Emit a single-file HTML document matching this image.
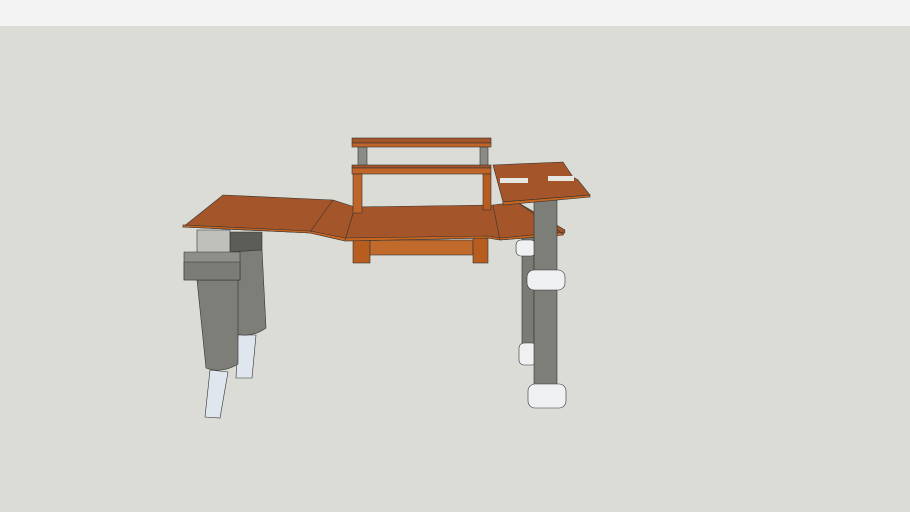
<!DOCTYPE html>
<html><head><style>
html,body{margin:0;padding:0;width:910px;height:512px;overflow:hidden;background:#dcdcd6}
</style></head><body>
<svg width="910" height="512" xmlns="http://www.w3.org/2000/svg" style="display:block">
<rect x="0" y="0" width="910" height="26" fill="#f3f3f3"/>
<rect x="0" y="26" width="910" height="486" fill="#dcdcd6"/>
<g stroke="#333" stroke-width="0.6">
<rect x="522" y="230" width="12" height="125" fill="#7a7b74"/>
<rect x="516" y="240" width="20" height="16" rx="5" fill="#eef0f2"/>
<rect x="519" y="343" width="18" height="22" rx="5" fill="#eef0f2"/>
<polygon points="238,335 256,335 252,378 236,378" fill="#dfe6ee"/>
<path d="M232,250 L262,250 L266,328 Q252,338 236,334 Z" fill="#7d7e77"/>
<polygon points="230,232 262,232 262,250 230,252" fill="#5c5d58"/>
<polygon points="210,370 228,372 220,418 205,417" fill="#dfe6ee"/>
<path d="M197,280 L238,280 L238,364 Q222,374 206,368 Z" fill="#7d7e77"/>
<polygon points="197,230 230,230 230,262 197,262" fill="#b8b9b5" fill-opacity="0.8"/>
<polygon points="184,252 240,252 240,280 184,280" fill="#8e8f89"/>
<polygon points="184,262 240,262 240,280 184,280" fill="#7b7c76"/>
<rect x="353" y="238" width="17" height="25" fill="#b85d20"/>
<rect x="370" y="240" width="103" height="15" fill="#c06a2b"/>
<rect x="473" y="238" width="15" height="25" fill="#b85d20"/>
<polygon points="223,195 333,200 355,207 493,205 517,202 565,230 563,235 500,240 488,238 345,241 310,233 183,227" fill="#a4552a"/>
<polygon points="183,227 310,233 345,241 488,238 500,240 563,235 565,232 500,238 488,236 345,238 310,231 183,225" fill="#c8661f"/>
<line x1="333" y1="200" x2="310" y2="232" />
<line x1="355" y1="207" x2="345" y2="240"/>
<line x1="493" y1="205" x2="500" y2="240"/>
<line x1="517" y1="202" x2="563" y2="234"/>
<rect x="534" y="200" width="23" height="192" fill="#7d7e77"/>
<rect x="527" y="270" width="38" height="20" rx="7" fill="#eef0f2"/>
<rect x="528" y="384" width="38" height="24" rx="7" fill="#eef0f2"/>
<polygon points="493,165 563,162 573,177 578,180 590,195 503,202" fill="#a4552a"/>
<polygon points="503,202 590,195 590,197 503,205" fill="#c8661f"/>
<rect x="358" y="147" width="9" height="19" fill="#8a8b85"/>
<rect x="480" y="147" width="8" height="19" fill="#8a8b85"/>
<rect x="352" y="138" width="139" height="5" fill="#a4552a"/>
<rect x="352" y="143" width="139" height="4" fill="#c0652a"/>
<rect x="352" y="165" width="139" height="3" fill="#a4552a"/>
<rect x="352" y="168" width="139" height="6" fill="#c0652a"/>
<rect x="353" y="174" width="9" height="39" fill="#c0652a"/>
<rect x="483" y="174" width="8" height="36" fill="#b85d20"/>
</g>
<rect x="500" y="178" width="28" height="5" fill="#e6e6e2"/>
<rect x="548" y="176" width="26" height="5" fill="#e6e6e2"/>
</svg>
</body></html>
